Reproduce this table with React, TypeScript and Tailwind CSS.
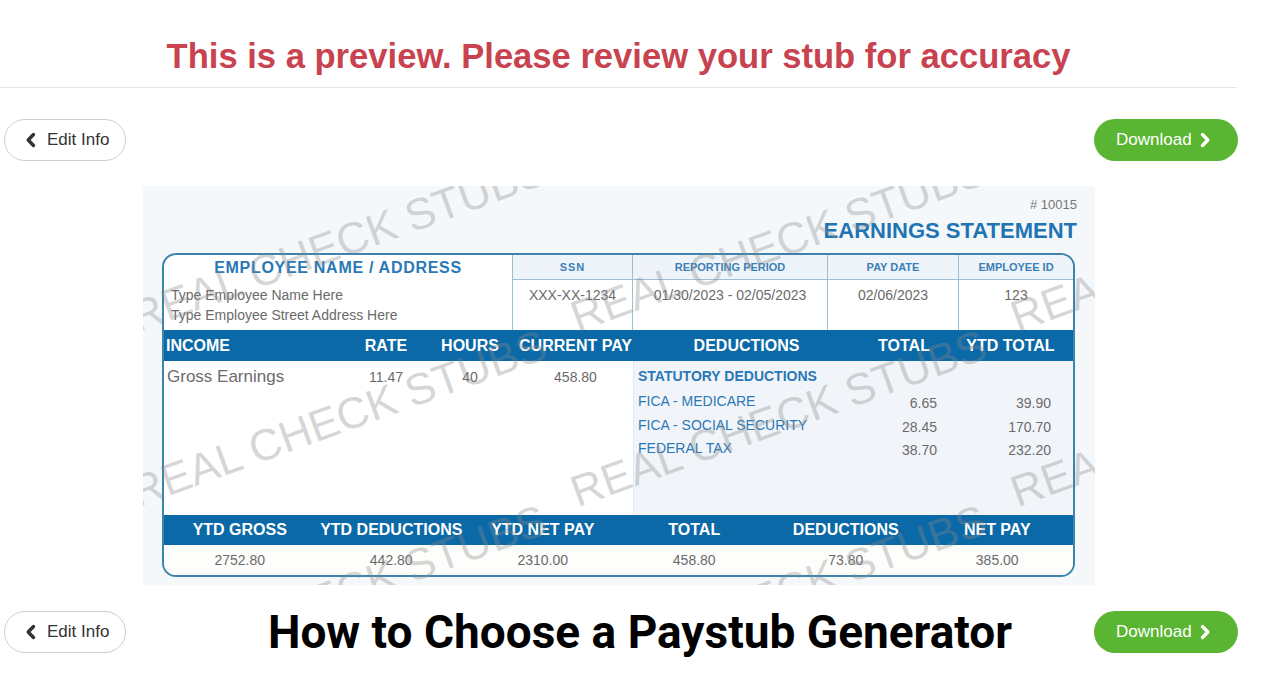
const topCells = [
  { label: "SSN", value: "XXX-XX-1234", w: "w-[120px]", tracking: "tracking-[1px]" },
  { label: "REPORTING PERIOD", value: "01/30/2023 - 02/05/2023", w: "w-[195px]", tracking: "" },
  { label: "PAY DATE", value: "02/06/2023", w: "w-[131px]", tracking: "" },
  { label: "EMPLOYEE ID", value: "123", w: "flex-1", tracking: "" },
];

const deductions = [
  { name: "FICA - MEDICARE", total: "6.65", ytd: "39.90" },
  { name: "FICA - SOCIAL SECURITY", total: "28.45", ytd: "170.70" },
  { name: "FEDERAL TAX", total: "38.70", ytd: "232.20" },
];

const summary = [
  { label: "YTD GROSS", value: "2752.80" },
  { label: "YTD DEDUCTIONS", value: "442.80" },
  { label: "YTD NET PAY", value: "2310.00" },
  { label: "TOTAL", value: "458.80" },
  { label: "DEDUCTIONS", value: "73.80" },
  { label: "NET PAY", value: "385.00" },
];

// watermark origins (baseline start), relative to the stub panel
const marks: { x: number; y: number }[] = [];
[-26, 149, 324, 499].forEach((y) => [-3, 437, 877].forEach((x) => marks.push({ x, y })));

function Chevron({ dir }: { dir: "left" | "right" }) {
  return (
    <svg width="12" height="16" viewBox="0 0 12 16" fill="none" stroke="currentColor" strokeWidth="3.4" strokeLinecap="round" strokeLinejoin="round">
      {dir === "left" ? <path d="M8.5 2.5 L3.2 8 L8.5 13.5" /> : <path d="M3.5 2.5 L8.8 8 L3.5 13.5" />}
    </svg>
  );
}

function EditButton() {
  return (
    <button className="w-[122px] h-[42px] rounded-full border border-[#cfcfcf] bg-white flex items-center gap-[10px] pl-[20px] text-[17px] text-[#333]">
      <Chevron dir="left" />
      <span>Edit Info</span>
    </button>
  );
}

function DownloadButton() {
  return (
    <button className="w-[144px] h-[42px] rounded-full bg-[#5ab532] flex items-center gap-[7px] pl-[22px] text-[17px] text-white">
      <span>Download</span>
      <Chevron dir="right" />
    </button>
  );
}

export default function App() {
  return (
    <div className="w-[1280px] h-[700px] bg-white font-['Liberation_Sans',Arial,sans-serif] overflow-hidden">
      <div className="w-[1237px] border-b border-[#e6e6e6] pt-[37px] pb-[11px] text-center">
        <h1 className="text-[34.6px] leading-[39px] font-bold text-[#c8434f]">
          This is a preview. Please review your stub for accuracy
        </h1>
      </div>

      <div className="mt-[31px] pl-[4px] pr-[42px] flex justify-between">
        <EditButton />
        <DownloadButton />
      </div>

      <div className="relative mt-[25px] ml-[143px] w-[952px] h-[399px] bg-[#f5f8fb] overflow-hidden px-[18px] pt-[10px]">
        <div className="text-right text-[13px] leading-[18px] text-[#777]"># 10015</div>
        <div className="mt-[5px] text-right text-[22px] leading-[24px] font-bold text-[#1f74b4]">EARNINGS STATEMENT</div>

        <div className="mt-[10px] ml-[1px] w-[913px] border-2 border-[#3c84ad] rounded-[14px] overflow-hidden bg-white">
          {/* header info */}
          <div className="flex h-[75px]">
            <div className="w-[349px] border-r border-[#9cbfd6]">
              <div className="h-[25px] flex items-center justify-center text-[16px] font-bold tracking-[0.7px] text-[#2a78b6]">
                EMPLOYEE NAME / ADDRESS
              </div>
              <div className="pl-[7px] pt-[5px] text-[14px] leading-[20px] text-[#6b6b6b]">
                <div>Type Employee Name Here</div>
                <div>Type Employee Street Address Here</div>
              </div>
            </div>
            {topCells.map((c, i) => (
              <div key={c.label} className={`${c.w} flex flex-col ${i < topCells.length - 1 ? "border-r border-[#9cbfd6]" : ""}`}>
                <div className={`h-[25px] bg-[#eef4f9] border-b border-[#9cbfd6] flex items-center justify-center text-[11px] font-bold text-[#3c80b6] ${c.tracking}`}>
                  {c.label}
                </div>
                <div className="pt-[5px] text-center text-[14px] leading-[20px] text-[#6b6b6b]">{c.value}</div>
              </div>
            ))}
          </div>

          {/* income / deductions bar */}
          <div className="h-[31px] bg-[#0b69a7] text-white text-[16px] font-bold grid grid-cols-[186px_72px_96px_115px_227px_88px_1fr] items-center">
            <div className="pl-[2px]">INCOME</div>
            <div className="text-center">RATE</div>
            <div className="text-center">HOURS</div>
            <div className="text-center">CURRENT PAY</div>
            <div className="text-center">DEDUCTIONS</div>
            <div className="text-center">TOTAL</div>
            <div className="text-center">YTD TOTAL</div>
          </div>

          {/* body */}
          <div className="flex h-[154px]">
            <div className="w-[469px] bg-white grid grid-cols-[186px_72px_96px_115px] content-start pt-[6px] text-[#6b6b6b]">
              <div className="pl-[3px] text-[17px] leading-[20px]">Gross Earnings</div>
              <div className="text-center text-[14px] leading-[20px]">11.47</div>
              <div className="text-center text-[14px] leading-[20px]">40</div>
              <div className="text-center text-[14px] leading-[20px]">458.80</div>
            </div>
            <div className="flex-1 bg-[#f1f5fa] border-l border-[#e3ebf3] pl-[4px] pt-[6px]">
              <div className="text-[14px] leading-[18px] font-bold text-[#2a78b6]">STATUTORY DEDUCTIONS</div>
              {deductions.map((d) => (
                <div key={d.name} className="grid grid-cols-[222px_77px_1fr] h-[23.5px] items-center text-[14px]">
                  <div className="text-[#2a78b6] pt-[4px]">{d.name}</div>
                  <div className="text-right text-[#6b6b6b] pt-[8px]">{d.total}</div>
                  <div className="text-right pr-[22px] text-[#6b6b6b] pt-[8px]">{d.ytd}</div>
                </div>
              ))}
            </div>
          </div>

          {/* summary */}
          <div className="h-[30px] bg-[#0b69a7] grid grid-cols-6 items-center text-white text-[16px] font-bold">
            {summary.map((s) => (
              <div key={s.label} className="text-center">{s.label}</div>
            ))}
          </div>
          <div className="h-[30px] grid grid-cols-6 items-center text-[14px] text-[#6b6b6b] bg-[#fdfdfb]">
            {summary.map((s) => (
              <div key={s.label} className="text-center">{s.value}</div>
            ))}
          </div>
        </div>

        {/* watermark */}
        <div className="absolute inset-0 pointer-events-none">
          {marks.map((m, i) => (
            <span
              key={i}
              className="absolute whitespace-nowrap text-[44px] leading-[44px] text-[#8a8a8a]/35 origin-bottom-left -rotate-[20deg]"
              style={{ left: m.x, top: m.y - 40 }}
            >
              REAL CHECK STUBS
            </span>
          ))}
        </div>
      </div>

      <div className="mt-[23px] grid grid-cols-[1fr_auto_1fr] items-center">
        <div className="pl-[4px]">
          <EditButton />
        </div>
        <h2 className="font-['Roboto',sans-serif] font-bold text-[46px] leading-[48px] text-black">
          How to Choose a Paystub Generator
        </h2>
        <div className="flex justify-end pr-[42px]">
          <DownloadButton />
        </div>
      </div>
    </div>
  );
}
